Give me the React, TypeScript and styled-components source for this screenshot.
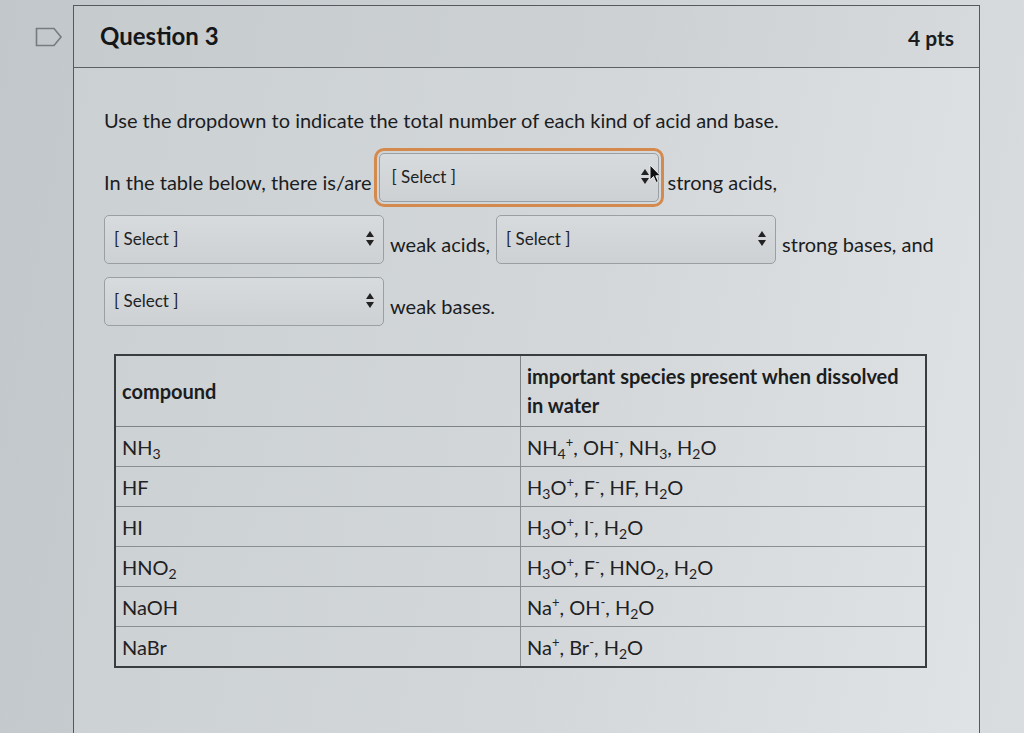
import React from 'react';
import styled, { createGlobalStyle } from 'styled-components';

const GlobalStyle = createGlobalStyle`
  html, body {
    margin: 0;
    padding: 0;
    background: #c6cbcf;
  }
  body {
    font-family: Lato, 'Open Sans', 'Liberation Sans', sans-serif;
    color: #1b1d1f;
  }
`;

const Page = styled.div`
  display: flex;
  min-height: 733px;
  padding-top: 5px;
  box-sizing: border-box;
  background: linear-gradient(100deg, #c2c7cb 0%, #ccd1d4 50%, #d9dddf 100%);
`;

const Gutter = styled.div`
  width: 73px;
  flex: none;
  display: flex;
  justify-content: flex-end;
  align-items: flex-start;
  padding: 22px 10px 0 0;
  box-sizing: border-box;
`;

const Card = styled.div`
  width: 905px;
  flex: none;
  border: 1px solid #55595d;
  border-bottom: none;
  background: linear-gradient(100deg, #cbd0d3 0%, #d3d7da 55%, #e0e3e5 100%);
`;

const Header = styled.div`
  height: 61px;
  display: flex;
  align-items: center;
  justify-content: space-between;
  padding: 0 25px 0 26px;
  border-bottom: 1px solid #5c6064;
  background: rgba(0, 0, 0, 0.025);
`;

const Title = styled.div`
  font-size: 24px;
  font-weight: 700;
  color: #141618;
  margin-top: -3px;
`;

const Points = styled.div`
  font-size: 21px;
  font-weight: 700;
  color: #1a1c1e;
  margin-top: 2px;
`;

const Body = styled.div`
  padding: 39px 0 0 30px;
  font-size: 20px;
`;

const Intro = styled.p`
  margin: 0 0 20px;
  line-height: 26px;
`;

const Line = styled.div`
  display: flex;
  align-items: center;
  gap: 6px;
  margin-bottom: 13px;

  & > span {
    padding-top: 9px;
  }
`;

const SelectBox = styled.div<{ $focused?: boolean }>`
  position: relative;
  width: 280px;
  height: 49px;
  flex: none;
  box-sizing: border-box;
  display: flex;
  align-items: center;
  justify-content: space-between;
  padding: 0 9px 2px 9px;
  border: 1px solid #9a9fa3;
  border-radius: 5px;
  background: linear-gradient(180deg, #d8dbdd 0%, #cdd1d4 100%);
  font-size: 17px;
  color: #202224;
  outline: ${(p) => (p.$focused ? '3px solid #d48a4d' : 'none')};
  outline-offset: 2px;
  ${(p) => (p.$focused ? 'padding-left: 12px; margin: 0 3px 0 1px;' : '')}
`;

const Cursor = styled.svg`
  position: absolute;
  right: -4px;
  top: 10px;
`;

const Table = styled.table`
  margin: 28px 0 0 10px;
  width: 813px;
  border-collapse: collapse;
  border: 2px solid #3a3d40;
  font-size: 20px;
`;

const HeadCell = styled.th`
  width: 50%;
  height: 70px;
  text-align: left;
  font-weight: 700;
  line-height: 29px;
  padding: 0 6px;
  border: 1px solid #7e8387;
  border-top: 2px solid #3a3d40;
  color: #1b1d1f;
`;

const Cell = styled.td`
  height: 39px;
  padding: 0 6px;
  border: 1px solid #8a8f93;
  color: #1f2123;
`;

const Sub = styled.sub`
  font-size: 14px;
  vertical-align: -4px;
  line-height: 0;
`;

const Sup = styled.sup`
  font-size: 13px;
  vertical-align: 8px;
  line-height: 0;
`;

type Row = { compound: React.ReactNode; species: React.ReactNode };

const getRows = (): Row[] => [
  {
    compound: <>NH<Sub>3</Sub></>,
    species: <>NH<Sub>4</Sub><Sup>+</Sup>, OH<Sup>-</Sup>, NH<Sub>3</Sub>, H<Sub>2</Sub>O</>,
  },
  {
    compound: <>HF</>,
    species: <>H<Sub>3</Sub>O<Sup>+</Sup>, F<Sup>-</Sup>, HF, H<Sub>2</Sub>O</>,
  },
  {
    compound: <>HI</>,
    species: <>H<Sub>3</Sub>O<Sup>+</Sup>, I<Sup>-</Sup>, H<Sub>2</Sub>O</>,
  },
  {
    compound: <>HNO<Sub>2</Sub></>,
    species: <>H<Sub>3</Sub>O<Sup>+</Sup>, F<Sup>-</Sup>, HNO<Sub>2</Sub>, H<Sub>2</Sub>O</>,
  },
  {
    compound: <>NaOH</>,
    species: <>Na<Sup>+</Sup>, OH<Sup>-</Sup>, H<Sub>2</Sub>O</>,
  },
  {
    compound: <>NaBr</>,
    species: <>Na<Sup>+</Sup>, Br<Sup>-</Sup>, H<Sub>2</Sub>O</>,
  },
];

const Arrows = () => (
  <svg width="8" height="15" viewBox="0 0 8 15">
    <path d="M4 0 L8 6 L0 6 Z" fill="#222" />
    <path d="M4 15 L8 9 L0 9 Z" fill="#222" />
  </svg>
);

const Dropdown = (props: { focused?: boolean }) => (
  <SelectBox $focused={props.focused}>
    <span>[ Select ]</span>
    <Arrows />
    {props.focused && (
      <Cursor width="13" height="20" viewBox="0 0 13 20">
        <path
          d="M1 1 L1 16 L4.5 12.5 L7 18.5 L9.3 17.5 L6.8 11.8 L11.5 11.8 Z"
          fill="#111"
          stroke="#e8eaeb"
          strokeWidth="1"
          strokeLinejoin="round"
        />
      </Cursor>
    )}
  </SelectBox>
);

const App = () => {
  const rows = getRows();
  return (
    <>
      <GlobalStyle />
      <Page>
        <Gutter>
          <svg width="28" height="20" viewBox="0 0 28 20">
            <path
              d="M1.5 1.5 H19 L26 10 L19 18.5 H1.5 Z"
              fill="none"
              stroke="#767b7f"
              strokeWidth="1.6"
            />
          </svg>
        </Gutter>
        <Card>
          <Header>
            <Title>Question 3</Title>
            <Points>4 pts</Points>
          </Header>
          <Body>
            <Intro>
              Use the dropdown to indicate the total number of each kind of acid
              and base.
            </Intro>
            <Line>
              <span>In the table below, there is/are</span>
              <Dropdown focused />
              <span>strong acids,</span>
            </Line>
            <Line>
              <Dropdown />
              <span>weak acids,</span>
              <Dropdown />
              <span>strong bases, and</span>
            </Line>
            <Line>
              <Dropdown />
              <span>weak bases.</span>
            </Line>
            <Table>
              <thead>
                <tr>
                  <HeadCell>compound</HeadCell>
                  <HeadCell>
                    important species present when dissolved
                    <br />
                    in water
                  </HeadCell>
                </tr>
              </thead>
              <tbody>
                {rows.map((r, i) => (
                  <tr key={i}>
                    <Cell>{r.compound}</Cell>
                    <Cell>{r.species}</Cell>
                  </tr>
                ))}
              </tbody>
            </Table>
          </Body>
        </Card>
      </Page>
    </>
  );
};

export default App;
